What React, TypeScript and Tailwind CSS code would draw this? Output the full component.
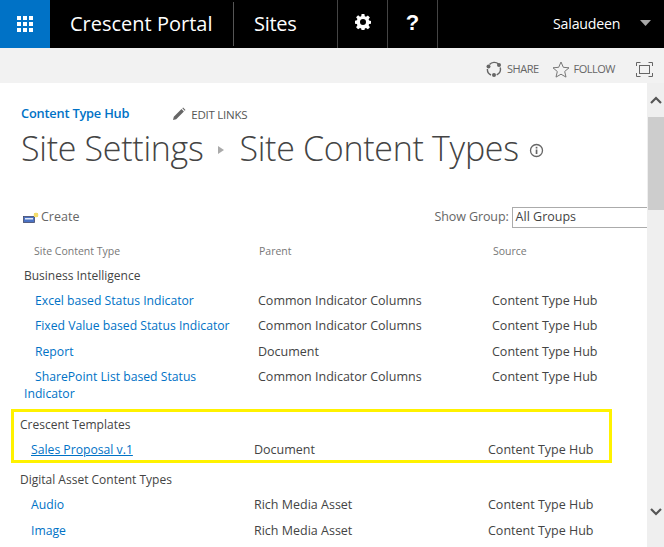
import React from "react";

const font = { fontFamily: '"Open Sans", "Noto Sans", sans-serif' };

function Row({ name, parent, two }: { name: React.ReactNode; parent: string; two?: boolean }) {
  return (
    <div className={two ? "flex h-[43px] text-[12.5px] leading-[17px] text-[#444]" : "flex h-[25.5px] items-center text-[12.5px] text-[#444]"}>
      <div className={two ? "w-[258px] shrink-0 pt-[3px] pl-[24px] text-[12.2px] text-[#0072c6]" : "w-[258px] shrink-0 pl-[35px] text-[12.2px] text-[#0072c6]"}>{name}</div>
      <div className={two ? "w-[234px] shrink-0 pt-[3px]" : "w-[234px] shrink-0"}>{parent}</div>
      <div className={two ? "pt-[3px]" : ""}>Content Type Hub</div>
    </div>
  );
}

export default function App() {
  return (
    <div style={font} className="flex h-[547px] w-[664px] flex-col overflow-hidden bg-white">
      <header className="flex h-[48px] shrink-0 bg-black text-white">
        <div className="flex w-[50px] items-center justify-center bg-[#0072c6]">
          <svg width="16" height="16" viewBox="0 0 16 16" fill="#fff">
            <rect x="0" y="0" width="4" height="4" /><rect x="6" y="0" width="4" height="4" /><rect x="12" y="0" width="4" height="4" />
            <rect x="0" y="6" width="4" height="4" /><rect x="6" y="6" width="4" height="4" /><rect x="12" y="6" width="4" height="4" />
            <rect x="0" y="12" width="4" height="4" /><rect x="6" y="12" width="4" height="4" /><rect x="12" y="12" width="4" height="4" />
          </svg>
        </div>
        <div className="flex w-[183px] items-center pb-[1px] pl-[20px] text-[20px]">Crescent Portal</div>
        <div className="my-[2px] w-px bg-[#555]" />
        <div className="flex w-[103px] items-center pb-[1px] pl-[20px] text-[20px] tracking-[-0.3px]">Sites</div>
        <div className="w-px bg-[#444]" />
        <div className="flex w-[49px] items-center justify-center pb-[5px]">
          <svg width="16" height="16" viewBox="0 0 16 16">
            <path fill="#fff" fillRule="evenodd" d="M6.6 0h2.8l.4 2.2 1.2.5 1.9-1.3 2 2-1.3 1.9.5 1.2 2 .4v2.800l-2 .4-.5 1.200 1.300 1.900-2 2-1.900-1.300-1.200.5-.4 2H6.600l-.4-2-1.200-.5-1.900 1.300-2-2 1.300-1.900-.5-1.200-1.900-.4V6.700l1.900-.4.5-1.200L1.100 3.200l2-2L5 2.700l1.200-.5zM8 5a3 3 0 1 0 0 6 3 3 0 0 0 0-6z" />
          </svg>
        </div>
        <div className="w-px bg-[#444]" />
        <div className="flex w-[49px] items-center justify-center pb-[4px] text-[22px] font-bold" style={{ fontFamily: '"Liberation Sans", sans-serif' }}>?</div>
        <div className="w-px bg-[#444]" />
        <div className="flex items-center pb-[1px] pl-[115px] text-[14.2px] whitespace-nowrap tracking-[-0.2px]">Salaudeen</div>
        <div className="flex flex-1 items-center justify-end pr-[13px] pb-[2px]">
          <svg width="11" height="6" viewBox="0 0 11 6"><path d="M0 0h11L5.500 6z" fill="#a8a8a8" /></svg>
        </div>
      </header>

      <div className="flex h-[35px] shrink-0 items-center justify-end bg-[#f2f2f2] pt-[7px] pr-[11px] text-[11px] tracking-[-0.5px] text-[#666]">
        <svg width="16" height="16" viewBox="0 0 16 16" fill="none">
          <path d="M3.500 3.500A6.300 6.300 0 0 1 12.500 3M14.200 6.500a6.300 6.300 0 0 1-3.500 7.300M5 14a6.300 6.300 0 0 1-3.600-6" stroke="#666" strokeWidth="1.400" />
          <circle cx="2.500" cy="5.500" r="2" fill="#666" /><circle cx="13" cy="4" r="2" fill="#666" /><circle cx="8" cy="14" r="2" fill="#666" />
        </svg>
        <span className="ml-[5px]">SHARE</span>
        <svg className="ml-[13px]" width="18" height="17" viewBox="0 0 18 17" fill="none">
          <path d="M9 1l2.300 5.300 5.700.5-4.300 3.700 1.300 5.600L9 13.200l-5 2.900 1.300-5.600L1 6.800l5.700-.5z" stroke="#777" />
        </svg>
        <span className="ml-[4px]">FOLLOW</span>
        <svg className="ml-[21px]" width="17" height="15" viewBox="0 0 17 15" fill="none" stroke="#666">
          <path d="M.5 4V.500h4M12.500.500h4V4M.5 11v3.500h4M12.500 14.500h4V11" />
          <rect x="3.500" y="3.500" width="10" height="8" />
        </svg>
      </div>

      <div className="flex min-h-0 flex-1">
        <main className="min-w-0 flex-1 overflow-hidden">
          <div className="flex items-center pt-[21px] pl-[21px] text-[12.8px]">
            <span className="font-semibold tracking-[-0.2px] text-[#0072c6]">Content Type Hub</span>
            <svg className="ml-[43px]" width="14" height="14" viewBox="0 0 14 14"><path d="M1 13l.8-3.200L9.500 2.100l2.400 2.400-7.700 7.700zM10.300 1.300l.8-.8 2.400 2.400-.8.800z" fill="#666" /></svg>
            <span className="ml-[5px] pt-[2px] text-[11.5px] tracking-[-0.25px] text-[#555]">EDIT LINKS</span>
          </div>
          <div className="flex h-[50px] items-center pl-[21px] text-[34px] font-light tracking-[-0.3px] whitespace-nowrap text-[#444]">
            <span>Site Settings</span>
            <svg className="mx-[15px] mt-[4px]" width="6" height="8" viewBox="0 0 6 8"><path d="M0 0l6 4-6 4z" fill="#aaa" /></svg>
            <span>Site Content Types</span>
            <svg className="mt-[5px] ml-[10px]" width="15" height="15" viewBox="0 0 15 15" fill="none">
              <circle cx="7.500" cy="7.500" r="6" stroke="#666" strokeWidth="1.300" />
              <rect x="6.700" y="6.500" width="1.700" height="4.500" fill="#666" /><rect x="6.700" y="3.800" width="1.700" height="1.700" fill="#666" />
            </svg>
          </div>

          <div className="mt-[34px] flex h-[21px] items-center text-[12.5px] text-[#666]">
            <svg className="ml-[23px]" width="16" height="12" viewBox="0 0 16 12">
              <rect x="0.500" y="4.500" width="11" height="6" fill="#4a72c4" stroke="#444a6a" strokeWidth="0.800" />
              <rect x="2" y="6" width="8" height="1.500" fill="#dfe8f8" />
              <path d="M13 0l.7 2.200 2.300.8-2.300.8L13 6l-.7-2.200L10 3l2.300-.8z" fill="#e9c93e" />
              <rect x="11" y="1" width="4" height="4" fill="#f3dc6b" />
            </svg>
            <span className="ml-[2px]">Create</span>
            <span className="ml-[355px] tracking-[-0.1px]">Show Group:</span>
            <div className="ml-[3px] flex h-[21px] flex-1 items-center border border-r-0 border-[#ababab] pl-[3px] text-[#444]">All Groups</div>
          </div>

          <div className="flex h-[31px] items-end text-[10.5px] text-[#777]">
            <div className="w-[259px] shrink-0 pl-[34px]">Site Content Type</div>
            <div className="w-[234px] shrink-0">Parent</div>
            <div>Source</div>
          </div>
          <div className="mt-[5px]">
            <div className="flex h-[24px] items-center pl-[24px] text-[12px] text-[#444]">Business Intelligence</div>
            <Row name="Excel based Status Indicator" parent="Common Indicator Columns" />
            <Row name="Fixed Value based Status Indicator" parent="Common Indicator Columns" />
            <Row name="Report" parent="Document" />
            <Row name={<><span className="pl-[11px]">SharePoint List based Status</span><br />Indicator</>} parent="Common Indicator Columns" two />
          </div>

          <div className="mt-[1px] ml-[11px] h-[54px] w-[601px] border-[3px] border-[#fff200] pt-[1px] text-[12.5px] text-[#444]">
            <div className="flex h-[24px] items-center pl-[6px] text-[12px]">Crescent Templates</div>
            <div className="mt-[1px] flex h-[25px] items-center">
              <div className="w-[240px] shrink-0 pl-[17px] text-[12.2px] text-[#0072c6] underline">Sales Proposal v.1</div>
              <div className="w-[234px] shrink-0">Document</div>
              <div>Content Type Hub</div>
            </div>
          </div>

          <div className="mt-[5px]">
            <div className="flex h-[24px] items-center pl-[20px] text-[12px] text-[#444]">Digital Asset Content Types</div>
            <div className="mt-[1px] -ml-[4px]">
              <Row name="Audio" parent="Rich Media Asset" />
              <Row name="Image" parent="Rich Media Asset" />
            </div>
          </div>
        </main>

        <aside className="flex w-[17px] shrink-0 flex-col bg-[#efefef]">
          <div className="flex h-[34px] shrink-0 items-center justify-center">
            <svg width="12" height="8" viewBox="0 0 12 8" fill="none"><path d="M1 7l5-5 5 5" stroke="#555" strokeWidth="2.200" /></svg>
          </div>
          <div className="ml-[1px] h-[93px] shrink-0 bg-[#cdcdcd]" />
          <div className="flex-1" />
          <div className="flex h-[40px] shrink-0 items-start justify-center pt-[1px]">
            <svg width="12" height="8" viewBox="0 0 12 8" fill="none"><path d="M1 1l5 5 5-5" stroke="#555" strokeWidth="2.200" /></svg>
          </div>
        </aside>
      </div>
    </div>
  );
}
